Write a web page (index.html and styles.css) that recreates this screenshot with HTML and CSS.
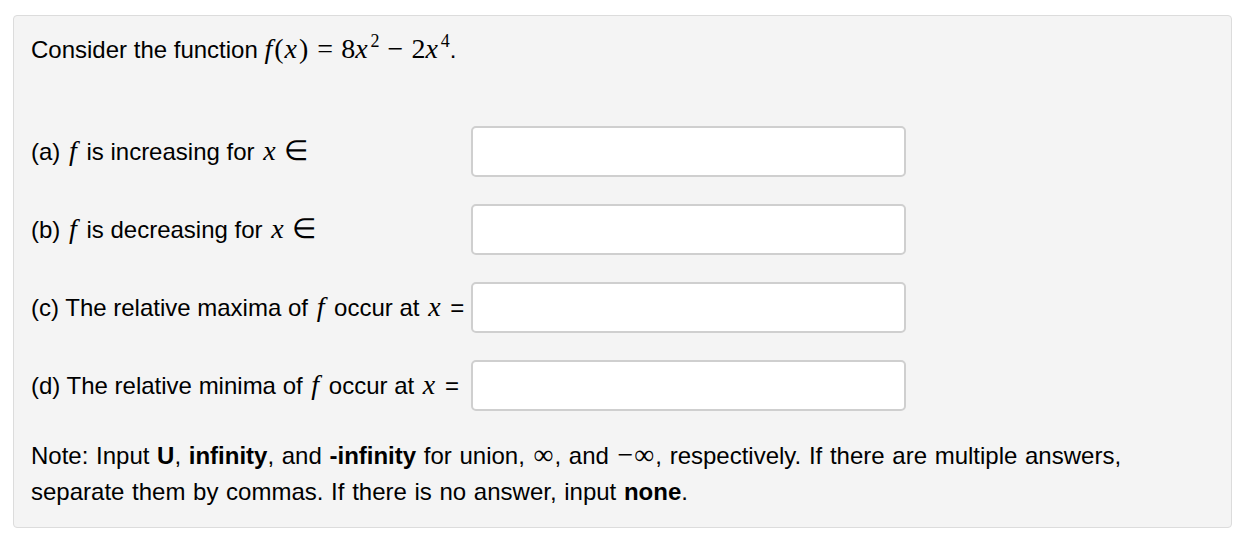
FILE: index.html
```html
<!DOCTYPE html>
<html>
<head>
<meta charset="utf-8">
<link rel="stylesheet" href="styles.css">
</head>
<body>
<div class="problem">
  <p class="intro">Consider the function <span class="math"><i>f</i><span class="paren">(</span><i>x</i><span class="paren">)</span><span class="op">=</span>8<i>x</i><sup>2</sup><span class="op">−</span>2<i>x</i><sup>4</sup></span>.</p>
  <div class="rows">
    <div class="label">(a) <span class="math sym"><i>f</i></span> is increasing for <span class="math sym"><i>x</i><span class="rel">∈</span></span></div>
    <input class="answer" type="text">
    <div class="label">(b) <span class="math sym"><i>f</i></span> is decreasing for <span class="math sym"><i>x</i><span class="rel">∈</span></span></div>
    <input class="answer" type="text">
    <div class="label">(c) The relative maxima of <span class="math sym"><i>f</i></span> occur at <span class="math sym"><i>x</i></span> =</div>
    <input class="answer" type="text">
    <div class="label">(d) The relative minima of <span class="math sym"><i>f</i></span> occur at <span class="math sym"><i>x</i></span> =</div>
    <input class="answer" type="text">
  </div>
  <p class="note">Note: Input <b>U</b>, <b>infinity</b>, and <b>-infinity</b> for union, <span class="math inf">∞</span>, and <span class="math inf"><span class="neg">−</span>∞</span>, respectively. If there are multiple answers,<br>separate them by commas. If there is no answer, input <b>none</b>.</p>
</div>
</body>
</html>
```
FILE: styles.css
```css
html, body {
  margin: 0;
  padding: 0;
  background: #ffffff;
}
body {
  font-family: "Liberation Sans", Arial, sans-serif;
  font-size: 24px;
  color: #000;
}
.problem {
  margin: 15px 13px 0 13px;
  height: 513px;
  box-sizing: border-box;
  border: 1px solid #dcdcdc;
  border-radius: 4px;
  background: #f4f4f4;
  padding: 19px 17px 0 17px;
}
.intro {
  margin: 0;
  line-height: 30px;
}
.math {
  font-family: "Liberation Serif", "Times New Roman", serif;
  font-size: 28px;
  line-height: 0;
}
.math i {
  font-style: italic;
  padding-right: 1px;
}
.sym {
  padding: 0 2px;
}
.paren {
  padding: 0 1px;
}
.math sup {
  font-size: 18px;
  line-height: 0;
  vertical-align: 11px;
  padding-left: 2px;
}
.op {
  padding: 0 8px;
}
.rel {
  padding-left: 7px;
}
.inf {
  font-size: 28px;
  padding: 0 1px;
}
.neg {
  padding-right: 1px;
}
.rows {
  margin-top: 61px;
  display: grid;
  grid-template-columns: 430px 435px;
  column-gap: 10px;
  row-gap: 27px;
  align-items: center;
}
.label {
  white-space: nowrap;
  line-height: 30px;
}
.answer {
  width: 435px;
  height: 51px;
  box-sizing: border-box;
  border: 2px solid #cfcfcf;
  border-radius: 5px;
  background: #fff;
  margin: 0;
  padding: 0 8px;
  font-size: 20px;
}
.note {
  margin: 27px 0 0 0;
  line-height: 36px;
  word-spacing: 1px;
}
.note b {
  font-weight: bold;
}
```
